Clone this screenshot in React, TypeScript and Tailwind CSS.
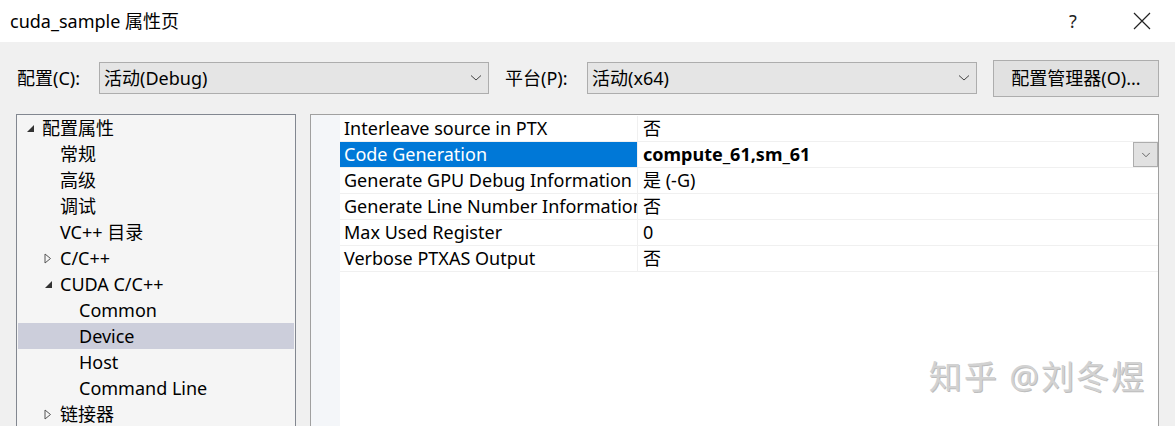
import { ChevronDown } from "lucide-react";

const font = { fontFamily: "'Noto Sans', 'Noto Sans CJK SC', sans-serif" };

const tree = [
  { label: "配置属性", depth: 0, arrow: "open" },
  { label: "常规", depth: 1 },
  { label: "高级", depth: 1 },
  { label: "调试", depth: 1 },
  { label: "VC++ 目录", depth: 1 },
  { label: "C/C++", depth: 1, arrow: "closed" },
  { label: "CUDA C/C++", depth: 1, arrow: "open" },
  { label: "Common", depth: 2 },
  { label: "Device", depth: 2, selected: true },
  { label: "Host", depth: 2 },
  { label: "Command Line", depth: 2 },
  { label: "链接器", depth: 1, arrow: "closed" },
];

const props = [
  { name: "Interleave source in PTX", value: "否" },
  { name: "Code Generation", value: "compute_61,sm_61", selected: true },
  { name: "Generate GPU Debug Information", value: "是 (-G)" },
  { name: "Generate Line Number Information", value: "否" },
  { name: "Max Used Register", value: "0" },
  { name: "Verbose PTXAS Output", value: "否" },
];

function Caret() {
  return (
    <svg width="12" height="8" viewBox="0 0 12 8" className="shrink-0">
      <path d="M1 1.5 L6 6 L11 1.5" fill="none" stroke="#444" strokeWidth="1" />
    </svg>
  );
}

function Select({ text, width }: { text: string; width: string }) {
  return (
    <div className={`${width} h-[32px] flex items-center justify-between pl-[4px] pr-[6px] bg-[#e5e5e5] border border-[#adadad]`}>
      <span className="text-[18px] text-black leading-none">{text}</span>
      <Caret />
    </div>
  );
}

export default function App() {
  return (
    <div className="w-[1175px] h-[426px] overflow-hidden bg-[#f0f0f0] text-[#1a1a1a]" style={font}>
      {/* title bar */}
      <div className="h-[42px] bg-white flex items-center justify-between pl-[10px]">
        <span className="text-[18px] text-black">cuda_sample 属性页</span>
        <div className="flex items-center">
          <span className="w-[50px] text-center text-[18px] text-[#222]">?</span>
          <svg width="18" height="18" viewBox="0 0 18 18" className="ml-[35px] mr-[24px]">
            <path d="M1 1 L17 17 M17 1 L1 17" stroke="#222" strokeWidth="1.2" />
          </svg>
        </div>
      </div>

      {/* config row */}
      <div className="flex items-center h-[72px] pl-[17px]">
        <span className="text-[18px] w-[82px] text-black">配置(C):</span>
        <Select text="活动(Debug)" width="w-[390px]" />
        <span className="text-[18px] ml-[16px] w-[82px] text-black">平台(P):</span>
        <Select text="活动(x64)" width="w-[390px]" />
        <button className="ml-[16px] w-[166px] h-[37px] bg-[#e1e1e1] border border-[#adadad] text-[18px] text-black">
          配置管理器(O)...
        </button>
      </div>

      {/* body */}
      <div className="flex pl-[16px] pr-[16px]">
        {/* tree */}
        <div className="w-[280px] h-[320px] border border-[#828790] bg-[#f5f5f5] px-[1px]">
          {tree.map((t) => (
            <div
              key={t.label}
              className={`h-[26px] flex items-center text-[18px] text-black ${t.selected ? "bg-[#cccedb]" : ""}`}
            >
              <div className={t.depth === 0 ? "w-[8px]" : t.depth === 1 ? "w-[26px]" : "w-[45px]"} />
              <span className="w-[16px] flex items-center">
                {t.arrow === "open" && (
                  <svg width="9" height="9" viewBox="0 0 9 9">
                    <path d="M8 1 L8 8 L1 8 Z" fill="#333" />
                  </svg>
                )}
                {t.arrow === "closed" && (
                  <svg width="8" height="11" viewBox="0 0 8 11">
                    <path d="M1 1 L6.5 5.5 L1 10 Z" fill="none" stroke="#555" strokeWidth="1" />
                  </svg>
                )}
              </span>
              <span>{t.label}</span>
            </div>
          ))}
        </div>

        {/* property grid */}
        <div className="ml-[14px] flex-1 h-[320px] border border-[#a0a0a0] bg-white flex">
          <div className="w-[29px] bg-[#f4f6f9]" />
          <div className="flex-1 pt-[1px]">
            {props.map((p) => (
              <div key={p.name} className="h-[26px] flex border-b border-[#f0f0f0]">
                <div
                  className={`w-[298px] pl-[4px] overflow-hidden whitespace-nowrap text-[18px] leading-[25px] border-r border-[#f0f0f0] ${
                    p.selected ? "bg-[#0078d7] text-white" : "text-black"
                  }`}
                >
                  {p.name}
                </div>
                <div className="flex-1 flex items-center justify-between pl-[5px]">
                  <span className={`text-[18px] leading-[25px] text-black ${p.selected ? "font-bold" : ""}`}>
                    {p.value}
                  </span>
                  {p.selected && (
                    <div className="w-[25px] h-[25px] bg-[#e1e1e1] border border-[#adadad] flex items-center justify-center">
                      <ChevronDown size={14} strokeWidth={1.2} className="text-[#333]" />
                    </div>
                  )}
                </div>
              </div>
            ))}
            <div className="flex justify-end pr-[12px] pt-[80px]">
              <span className="text-[33px] text-[#d2d2d2] tracking-[2px]" style={{ textShadow: "1px 1px 0 #bdbdbd" }}>
                知乎 @刘冬煜
              </span>
            </div>
          </div>
        </div>
      </div>
    </div>
  );
}
